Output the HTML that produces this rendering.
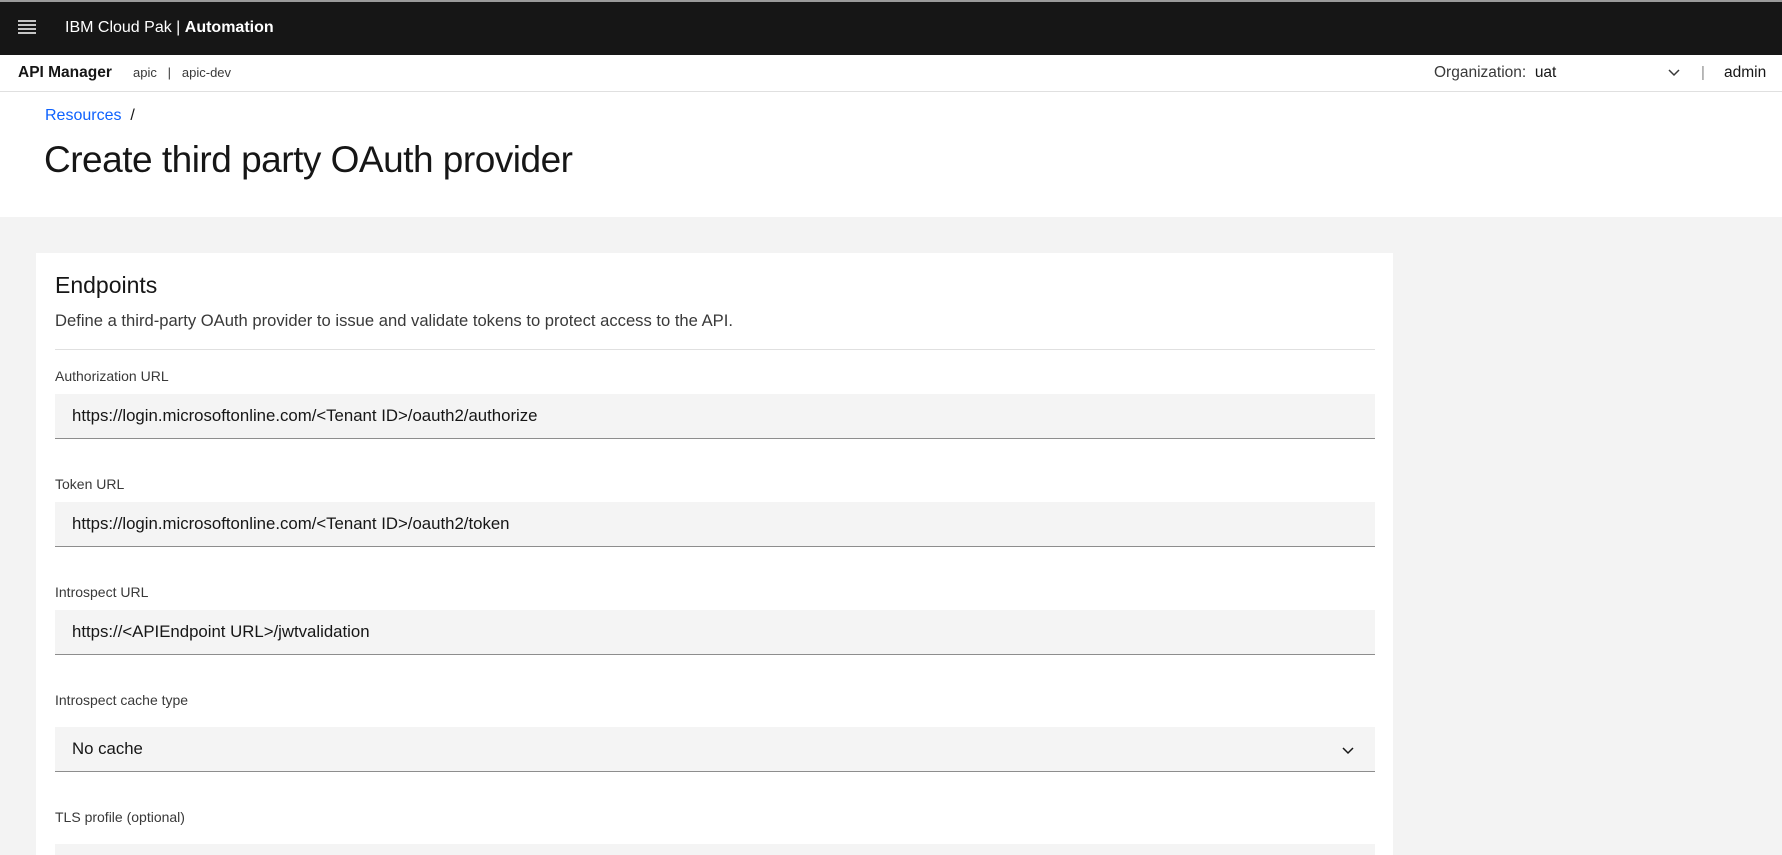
<!DOCTYPE html>
<html style="width:1782px;height:855px;overflow:hidden;background:#f3f3f3"><head><meta charset="utf-8"><style>
*{margin:0;padding:0;box-sizing:border-box}
body{width:1782px;height:855px;overflow:hidden;background:#f3f3f3;font-family:"Liberation Sans",sans-serif;color:#161616;position:relative}
.a{position:absolute}
.top{left:0;top:0;width:1782px;height:55px;background:#161616;border-top:2px solid #9a9a9a}
.sub{left:0;top:55px;width:1782px;height:37px;background:#fff;border-bottom:1px solid #e0e0e0}
.hdr{left:0;top:92px;width:1782px;height:125px;background:#fff}
.card{left:36px;top:253px;width:1357px;height:602px;background:#fff}
.lbl{font-size:14px;color:#393939;left:55px}
.inp{left:55px;width:1320px;height:45px;background:#f4f4f4;border-bottom:1px solid #8d8d8d;font-size:16.8px;padding-left:17px;line-height:44px;color:#161616}
</style></head><body>
<div class="a top">
 <div class="a" style="left:18px;top:18px;width:18px;height:15px">
  <div style="height:2px;background:#c6c6c6;margin-bottom:2px"></div><div style="height:2px;background:#c6c6c6;margin-bottom:2px"></div><div style="height:2px;background:#c6c6c6;margin-bottom:2px"></div><div style="height:2px;background:#c6c6c6"></div>
 </div>
 <div class="a" style="left:65px;top:17px;color:#fff;font-size:16px">IBM Cloud Pak | <b>Automation</b></div>
</div>
<div class="a sub">
 <div class="a" style="left:18px;top:9px;font-size:15.5px;font-weight:bold">API Manager</div>
 <div class="a" style="left:133px;top:10px;font-size:13px;color:#393939">apic &nbsp; | &nbsp; apic-dev</div>
 <div class="a" style="left:1434px;top:9px;font-size:15.5px;color:#393939">Organization:&nbsp; <span style="color:#161616">uat</span></div>
 <svg class="a" style="left:1667px;top:12px" width="14" height="10" viewBox="0 0 14 10"><path d="M2 3l5 5 5-5" fill="none" stroke="#393939" stroke-width="1.5"/></svg>
 <div class="a" style="left:1701px;top:9px;font-size:15px;color:#8d8d8d">|</div>
 <div class="a" style="left:1724px;top:9px;font-size:15.5px">admin</div>
</div>
<div class="a hdr">
 <div class="a" style="left:45px;top:15px;font-size:16px;color:#0f62fe">Resources <span style="color:#161616">&nbsp;/</span></div>
 <div class="a" style="left:44px;top:47px;font-size:37px;font-weight:300;letter-spacing:-0.5px">Create third party OAuth provider</div>
</div>
<div class="a card"></div>
<div class="a" style="left:55px;top:272px;font-size:23px">Endpoints</div>
<div class="a" style="left:55px;top:311px;font-size:16.6px;color:#393939">Define a third-party OAuth provider to issue and validate tokens to protect access to the API.</div>
<div class="a" style="left:55px;top:349px;width:1320px;height:1px;background:#e0e0e0"></div>
<div class="a lbl" style="top:368px">Authorization URL</div>
<div class="a inp" style="top:394px">https://login.microsoftonline.com/&lt;Tenant ID&gt;/oauth2/authorize</div>
<div class="a lbl" style="top:476px">Token URL</div>
<div class="a inp" style="top:502px">https://login.microsoftonline.com/&lt;Tenant ID&gt;/oauth2/token</div>
<div class="a lbl" style="top:584px">Introspect URL</div>
<div class="a inp" style="top:610px">https://&lt;APIEndpoint URL&gt;/jwtvalidation</div>
<div class="a lbl" style="top:692px">Introspect cache type</div>
<div class="a inp" style="top:727px">No cache</div>
<svg class="a" style="left:1341px;top:745px" width="14" height="10" viewBox="0 0 14 10"><path d="M2 3l5 5 5-5" fill="none" stroke="#161616" stroke-width="1.5"/></svg>
<div class="a lbl" style="top:809px">TLS profile (optional)</div>
<div class="a inp" style="top:844px;border:none;height:11px"></div>
</body></html>
